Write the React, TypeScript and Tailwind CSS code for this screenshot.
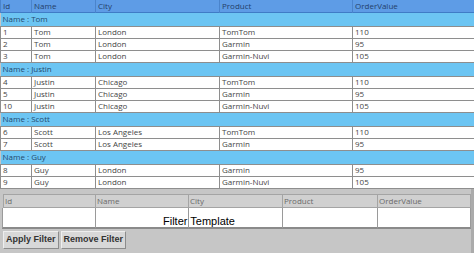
import React from "react";

type Row = { id: string; name: string; city: string; product: string; value: string };
const groups: { name: string; rows: Row[] }[] = [
  {
    name: "Tom",
    rows: [
      { id: "1", name: "Tom", city: "London", product: "TomTom", value: "110" },
      { id: "2", name: "Tom", city: "London", product: "Garmin", value: "95" },
      { id: "3", name: "Tom", city: "London", product: "Garmin-Nuvi", value: "105" },
    ],
  },
  {
    name: "Justin",
    rows: [
      { id: "4", name: "Justin", city: "Chicago", product: "TomTom", value: "110" },
      { id: "5", name: "Justin", city: "Chicago", product: "Garmin", value: "95" },
      { id: "10", name: "Justin", city: "Chicago", product: "Garmin-Nuvi", value: "105" },
    ],
  },
  {
    name: "Scott",
    rows: [
      { id: "6", name: "Scott", city: "Los Angeles", product: "TomTom", value: "110" },
      { id: "7", name: "Scott", city: "Los Angeles", product: "Garmin", value: "95" },
    ],
  },
  {
    name: "Guy",
    rows: [
      { id: "8", name: "Guy", city: "London", product: "Garmin", value: "95" },
      { id: "9", name: "Guy", city: "London", product: "Garmin-Nuvi", value: "105" },
    ],
  },
];

const headers = ["Id", "Name", "City", "Product", "OrderValue"];

export default function App() {
  return (
    <div className="relative w-[474px] h-[253px] overflow-hidden bg-[#c6c6c6] font-['Open_Sans',sans-serif]">
      <table className="w-[474px] table-fixed border-collapse text-[8px] leading-[10px]">
        <colgroup>
          <col className="w-[31px]" />
          <col className="w-[64px]" />
          <col className="w-[124px]" />
          <col className="w-[133px]" />
          <col className="w-[122px]" />
        </colgroup>
        <thead>
          <tr className="h-[12px] bg-[#5e9ce6] border-b border-[#3f7cc6]">
            {headers.map((h) => (
              <th
                key={h}
                className="p-0 pl-[2px] text-left font-normal text-[#24406a] border-l border-r border-[#4a84cc]"
              >
                {h}
              </th>
            ))}
          </tr>
        </thead>
        <tbody>
          {groups.map((g) => (
            <React.Fragment key={g.name}>
              <tr className="h-[14px] bg-[#6cc5f3]">
                <td colSpan={5} className="p-0 pl-[2px] text-[#25496e]">
                  Name : {g.name}
                </td>
              </tr>
              {g.rows.map((r) => (
                <tr key={r.id} className="h-[12px] bg-white text-[#454545]">
                  {[r.id, r.name, r.city, r.product, r.value].map((c, i) => (
                    <td key={i} className="p-0 pl-[2px] border border-[#8e8e8e] whitespace-nowrap">
                      {c}
                    </td>
                  ))}
                </tr>
              ))}
            </React.Fragment>
          ))}
        </tbody>
      </table>

      <div className="h-[65px] pt-[5px] pl-[3px] border-r-[3px] border-[#ababab]">
        <div className="grid grid-cols-[93px_93px_94px_95px_93px] w-[468px] text-[8px] leading-[12px] text-[#6a6a6a]">
          {headers.map((h) => (
            <div key={h} className="h-[14px] bg-[#d0d0d0] border border-[#a4a4a4] -ml-px first:ml-0 pl-[1px]">
              {h}
            </div>
          ))}
          {headers.map((h) => (
            <div key={h + "i"} className="h-[21px] bg-white border-l border-r border-b-2 border-[#9a9a9a] border-b-[#8a8a8a] -ml-px first:ml-0" />
          ))}
        </div>
        <div className="flex gap-[2px] mt-[2px] font-['Liberation_Sans',Arial,sans-serif] font-bold text-[9px] text-[#333]">
          <button className="h-[18px] px-[2px] bg-[#d8d8d8] border border-t-[#eeeeee] border-l-[#eeeeee] border-r-[#8c8c8c] border-b-[#8c8c8c]">
            Apply Filter
          </button>
          <button className="h-[18px] px-[2px] bg-[#d8d8d8] border border-t-[#eeeeee] border-l-[#eeeeee] border-r-[#8c8c8c] border-b-[#8c8c8c]">
            Remove Filter
          </button>
        </div>
      </div>

      <div className="absolute left-[163px] top-[215px] font-['Liberation_Sans',Arial,sans-serif] text-[11px] leading-[12px] text-black">
        Filter Template
      </div>
    </div>
  );
}
